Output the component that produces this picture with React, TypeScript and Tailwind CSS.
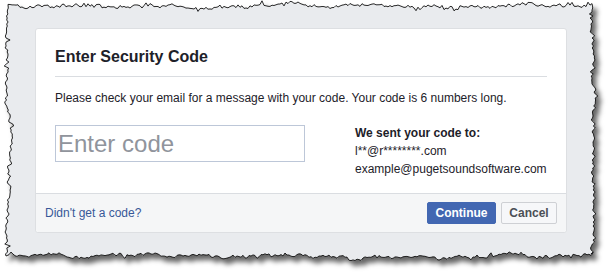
import React from "react";

// seeded random so the torn edge is the same on every render
function rng(seed: number) {
  let s = seed;
  return () => {
    s = (s * 16807) % 2147483647;
    return (s - 1) / 2147483646;
  };
}

function tornPath(l: number, t: number, r: number, b: number) {
  const rand = rng(7);
  const pts: string[] = [];
  let drift = 0;
  const jitter = () => {
    drift += (rand() - 0.5) * 2.4;
    drift *= 0.88;
    const spike = rand() < 0.12 ? (rand() - 0.5) * 5 : 0;
    return drift + (rand() - 0.5) * 2.6 + spike;
  };
  const step = 2;
  for (let x = l; x < r; x += step) pts.push(`${x.toFixed(1)},${(t + jitter()).toFixed(1)}`);
  for (let y = t; y < b; y += step) pts.push(`${(r + jitter()).toFixed(1)},${y.toFixed(1)}`);
  for (let x = r; x > l; x -= step) pts.push(`${x.toFixed(1)},${(b + jitter()).toFixed(1)}`);
  for (let y = b; y > t; y -= step) pts.push(`${(l + jitter()).toFixed(1)},${y.toFixed(1)}`);
  return "M" + pts.join(" L") + " Z";
}

const TornFrame: React.FC = () => (
  <svg className="absolute inset-0" width={610} height={277} viewBox="0 0 610 277">
    <defs>
      <filter id="shadow" x="-5%" y="-5%" width="115%" height="120%">
        <feDropShadow dx="4" dy="5" stdDeviation="2.4" floodColor="#000" floodOpacity="0.6" />
      </filter>
    </defs>
    <path
      d={tornPath(8, 6, 593, 256)}
      fill="#e9ebee"
      stroke="#111"
      strokeWidth={0.9}
      strokeLinejoin="miter"
      filter="url(#shadow)"
    />
  </svg>
);

export default function App() {
  return (
    <div
      className="relative w-[610px] h-[277px] bg-white overflow-hidden"
      style={{ fontFamily: '"Liberation Sans", Arial, Helvetica, sans-serif' }}
    >
      <TornFrame />

      <div className="relative pt-[28px] pl-[35px]">
        <div className="w-[532px] bg-white border border-[#dddfe2] rounded-[3px]">
          {/* Header */}
          <div className="mx-[19px] pt-[18px] pb-[9px] border-b border-[#dadde1]">
            <h1 className="text-[16px] leading-[20px] font-bold text-[#1d2129]">
              Enter Security Code
            </h1>
          </div>

          {/* Body */}
          <div className="px-[19px] pt-[13px] pb-[15px]">
            <p className="text-[12px] leading-[16px] text-[#1d2129]">
              Please check your email for a message with your code. Your code is 6 numbers long.
            </p>
            <div className="flex items-start gap-[50px] mt-[19px]">
              <input
                placeholder="Enter code"
                className="w-[250px] h-[37px] border border-[#bdc7d8] px-[2px] text-[24px] text-[#1d2129] placeholder:text-[#90949c] outline-none"
              />
              <div className="-mt-[1px] text-[12px] leading-[18px] text-[#1d2129]">
                <p className="font-bold">We sent your code to:</p>
                <p>l**@r********.com</p>
                <p>example@pugetsoundsoftware.com</p>
              </div>
            </div>
          </div>

          {/* Footer */}
          <div className="flex items-center justify-between px-[9px] py-[8px] bg-[#f5f6f7] border-t border-[#dadde1] rounded-b-[3px]">
            <a className="text-[12px] text-[#385898] cursor-pointer">Didn't get a code?</a>
            <div className="flex gap-[5px]">
              <button className="w-[69px] h-[22px] rounded-[2px] bg-[#4267b2] border border-[#4267b2] text-white text-[12px] font-bold">
                Continue
              </button>
              <button className="w-[56px] h-[22px] rounded-[2px] bg-[#f6f7f9] border border-[#ced0d4] text-[#4b4f56] text-[12px] font-bold">
                Cancel
              </button>
            </div>
          </div>
        </div>
      </div>
    </div>
  );
}
